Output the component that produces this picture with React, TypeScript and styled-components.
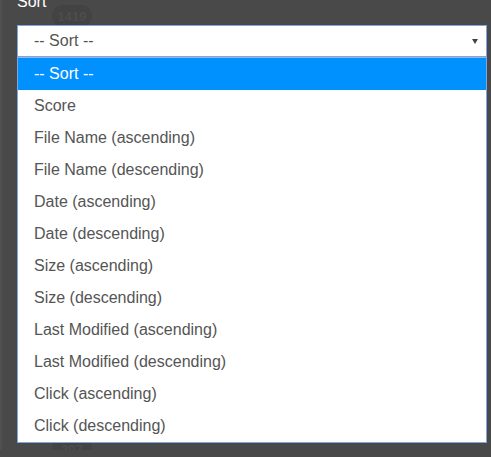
import React, { useState } from "react";
import styled, { createGlobalStyle } from "styled-components";

const options = [
  "-- Sort --",
  "Score",
  "File Name (ascending)",
  "File Name (descending)",
  "Date (ascending)",
  "Date (descending)",
  "Size (ascending)",
  "Size (descending)",
  "Last Modified (ascending)",
  "Last Modified (descending)",
  "Click (ascending)",
  "Click (descending)",
];

const GlobalStyle = createGlobalStyle`
  html, body {
    margin: 0;
    padding: 0;
    background: #494949;
    font-family: "Liberation Sans", Arial, sans-serif;
    overflow: hidden;
  }
`;

const Page = styled.div`
  position: relative;
  width: 491px;
  height: 457px;
  box-sizing: border-box;
  padding-left: 17px;
  border-left: 2px solid #505050;
`;

const Backdrop = styled.div`
  position: absolute;
  left: 50px;
  top: 12px;
  display: flex;
  flex-direction: column;
  gap: 411px;
`;

const Badge = styled.span`
  display: inline-flex;
  align-items: center;
  justify-content: center;
  width: 40px;
  height: 22px;
  border-radius: 11px;
  background: #434343;
  color: #4d4d4d;
  font-size: 13px;
  font-weight: bold;
`;

const Label = styled.div`
  color: #ffffff;
  font-size: 16px;
  line-height: 18px;
  margin-top: -7px;
  margin-left: -2px;
  height: 14px;
  position: relative;
`;

const Field = styled.div`
  position: relative;
  width: 470px;
  margin-top: 18px;
  margin-left: -2px;
`;

const SelectBox = styled.div`
  box-sizing: border-box;
  height: 32px;
  display: flex;
  align-items: center;
  justify-content: space-between;
  padding: 0 8px 0 16px;
  background: #ffffff;
  border: 1px solid #7ea6de;
  color: #555555;
  font-size: 16px;
`;

const Arrow = styled.span`
  width: 0;
  height: 0;
  border-left: 3px solid transparent;
  border-right: 3px solid transparent;
  border-top: 5px solid #444444;
  margin-top: 1px;
`;

const Menu = styled.ul`
  position: absolute;
  left: 0;
  right: 0;
  top: 32px;
  margin: 0;
  padding: 0;
  list-style: none;
  background: #ffffff;
  border: 1px solid #7ea6de;
  border-top-color: #9ab6da;
`;

const Option = styled.li<{ $active: boolean }>`
  height: 32px;
  display: flex;
  align-items: center;
  padding-left: 16px;
  font-size: 16px;
  color: ${(p) => (p.$active ? "#ffffff" : "#555555")};
  background: ${(p) => (p.$active ? "#0091ff" : "#ffffff")};
  cursor: default;
`;

export default function App() {
  const [active, setActive] = useState(0);

  return (
    <>
      <GlobalStyle />
      <Page>
        <Backdrop>
          <Badge>1419</Badge>
          <Badge>307</Badge>
        </Backdrop>
        <Label>Sort</Label>
        <Field>
          <SelectBox>
            <span>-- Sort --</span>
            <Arrow />
          </SelectBox>
          <Menu>
            {options.map((o, i) => (
              <Option
                key={o}
                $active={i === active}
                onMouseEnter={() => setActive(i)}
              >
                {o}
              </Option>
            ))}
          </Menu>
        </Field>
      </Page>
    </>
  );
}
